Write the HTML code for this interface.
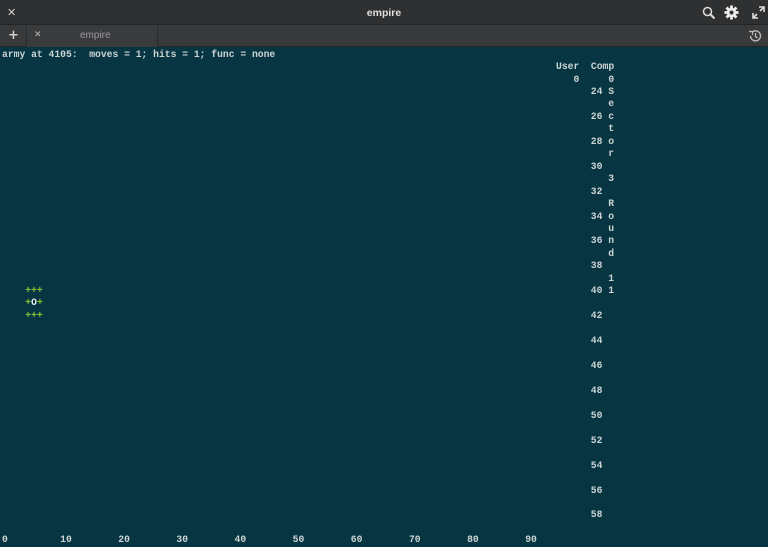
<!DOCTYPE html>
<html><head><meta charset="utf-8"><style>
*{margin:0;padding:0;box-sizing:border-box}
html,body{width:768px;height:547px;overflow:hidden;background:#073642}
#title{position:absolute;left:0;top:0;width:768px;height:25px;background:#2e3032;border-bottom:1px solid #232425}
#title .t{position:absolute;left:0;width:768px;top:7px;text-align:center;color:#e0e0e0;font:bold 10.5px "Liberation Sans",sans-serif}
#tabs{position:absolute;left:0;top:25px;width:768px;height:22px;background:#38393b;border-bottom:1px solid #232425}
.tab{position:absolute;left:26px;top:0;width:132px;height:22px;border-left:1px solid #2a2b2c;border-right:1px solid #2a2b2c;background:#3a3b3d}
.tab .n{position:absolute;left:53px;top:5px;color:#9a9b9c;font:10px "Liberation Sans",sans-serif}
.x{position:absolute;color:#d0d0d0;font:bold 11px "DejaVu Sans",sans-serif}
#term{position:absolute;left:0;top:47px;width:768px;height:500px;background:#073642}
.s{position:absolute;font:bold 9.7px/12.45px "Liberation Mono",monospace;color:#ccd4d4;white-space:pre}
.g{color:#86c232}
</style></head><body>
<div id="title"><span class="x" style="left:7px;top:6px">✕</span><div class="t">empire</div>
<svg style="position:absolute;left:702px;top:6px" width="14" height="14" viewBox="0 0 14 14"><circle cx="5.5" cy="5.5" r="4" fill="none" stroke="#ddd" stroke-width="1.5"/><path d="M8.5 8.5L12.5 12.5" stroke="#ddd" stroke-width="2"/></svg>
<svg style="position:absolute;left:724px;top:5px" width="15" height="15" viewBox="0 0 16 16"><g fill="#eee"><circle cx="8" cy="8" r="5"/><rect x="6.5" y="0.5" width="3" height="15"/><rect x="0.5" y="6.5" width="15" height="3"/><rect x="6.5" y="0.5" width="3" height="15" transform="rotate(45 8 8)"/><rect x="6.5" y="0.5" width="3" height="15" transform="rotate(-45 8 8)"/></g><circle cx="8" cy="8" r="2.2" fill="#2e3032"/></svg>
<svg style="position:absolute;left:752px;top:6px" width="13" height="13" viewBox="0 0 13 13"><path d="M7 1h5v5M12 1L8 5M6 12H1V7M1 12l4-4" fill="none" stroke="#ddd" stroke-width="1.6"/></svg>
</div>
<div id="tabs"><span class="x" style="left:8px;top:3px;font-size:13px">+</span>
<div class="tab"><span class="x" style="left:7px;top:5px;font-size:9px;color:#bbb">✕</span><span class="n">empire</span></div>
<svg style="position:absolute;left:748px;top:4px" width="14" height="14" viewBox="0 0 14 14"><path d="M2.5 7A5 5 0 1 0 4 3.3" fill="none" stroke="#bbb" stroke-width="1.4"/><path d="M1 2.5L4.5 2.5 4.5 6" fill="none" stroke="#bbb" stroke-width="1.2"/><path d="M7.5 4v3.5l2 1.5" fill="none" stroke="#bbb" stroke-width="1.3"/></svg>
</div>
<div id="term"></div>
<div class="s" style="left:2px;top:48.5px">army at 4105:  moves = 1; hits = 1; func = none</div>
<div class="s" style="left:556px;top:61px">User  Comp</div>
<div class="s" style="left:573.5px;top:73.5px">0     0</div>
<div class="s" style="left:590.8px;top:86px">24 S
   e
26 c
   t
28 o
   r
30
   3
32
   R
34 o
   u
36 n
   d
38
   1
40 1

42

44

46

48

50

52

54

56

58</div>
<div class="s g" style="left:25.3px;top:285px">+++
+<span style="color:#e8eeee">O</span>+
+++</div>
<div class="s" style="left:2px;top:534px">0         10        20        30        40        50        60        70        80        90</div>
</body></html>
